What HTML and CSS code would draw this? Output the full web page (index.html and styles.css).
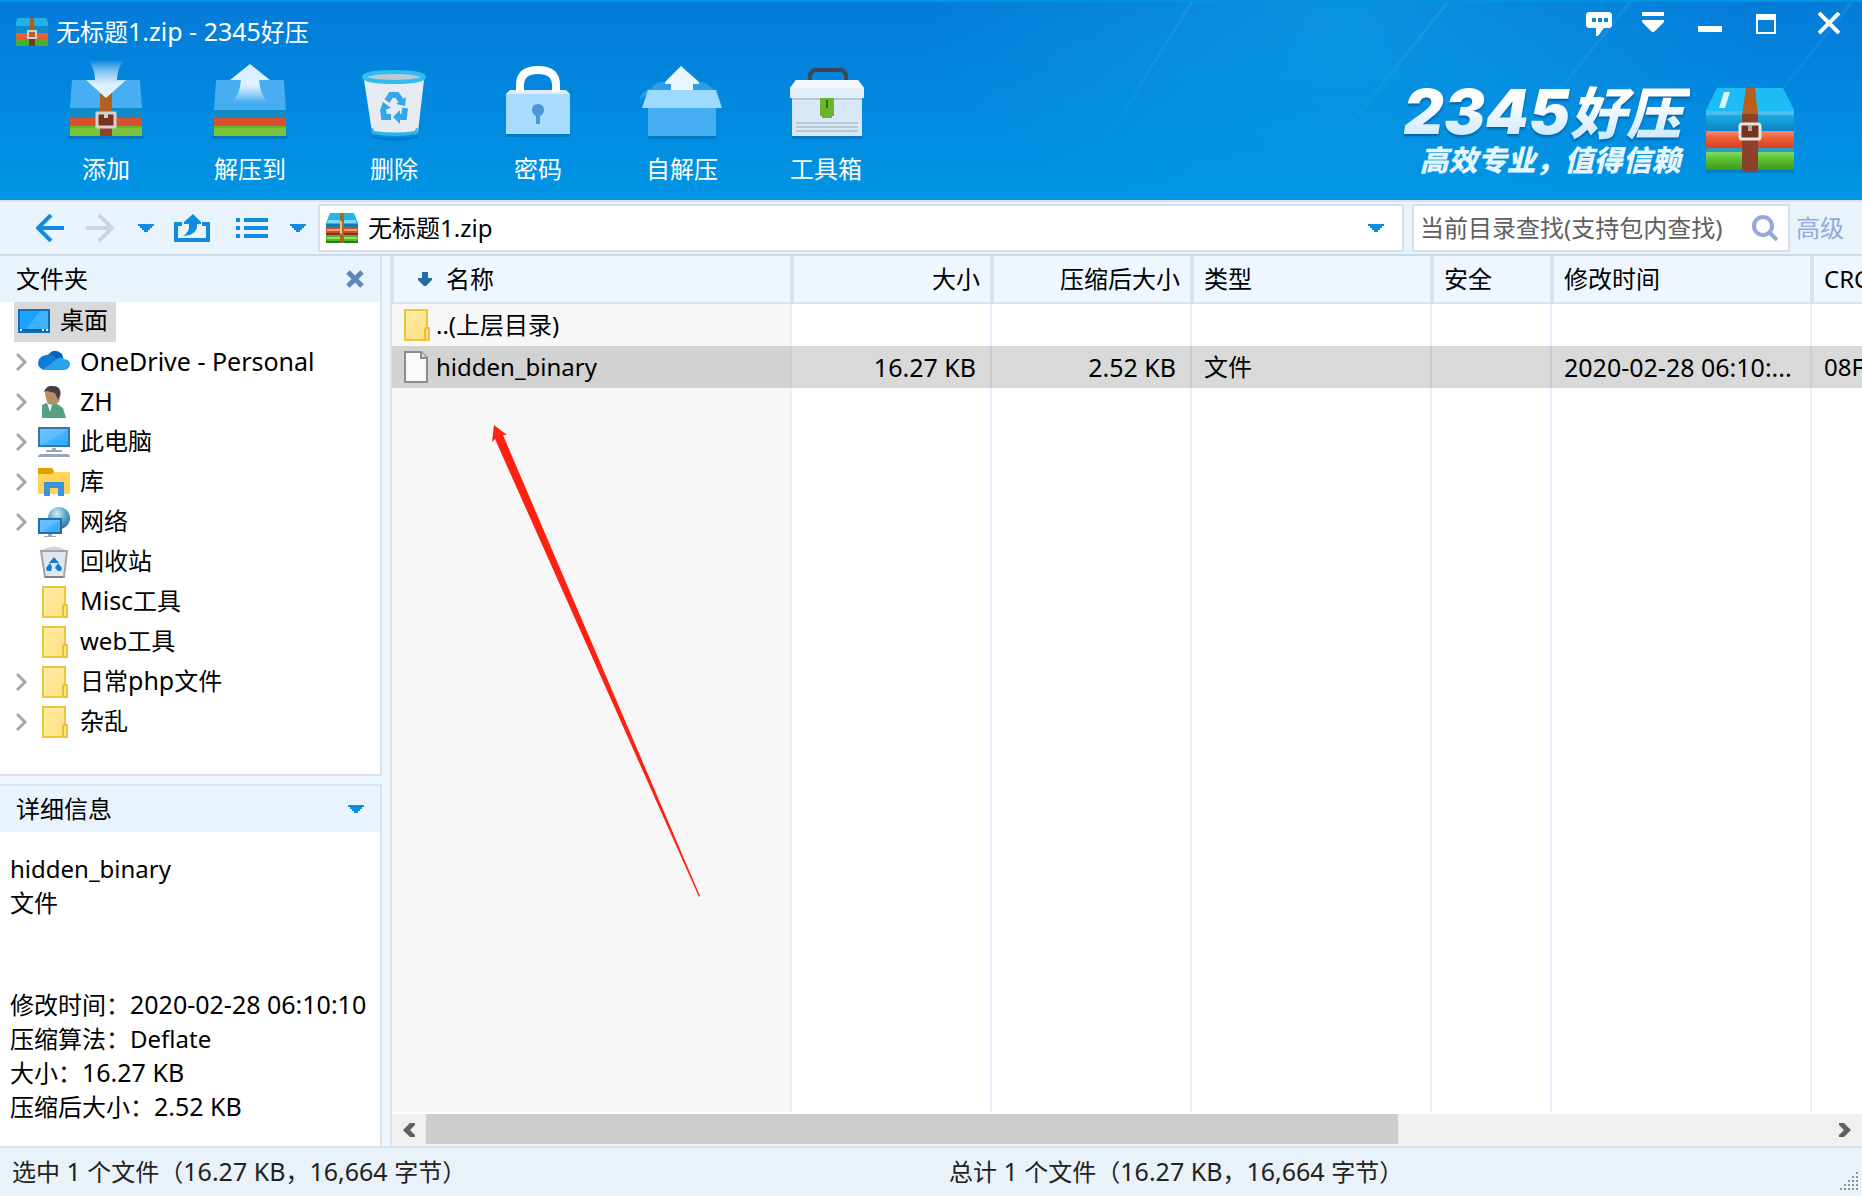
FILE: index.html
```html
<!DOCTYPE html>
<html lang="zh-CN">
<head>
<meta charset="utf-8">
<title>无标题1.zip - 2345好压</title>
<link rel="stylesheet" href="styles.css">
</head>
<body>
<svg class="defs" aria-hidden="true">
  <defs>
    <linearGradient id="g-down" x1="0" y1="0" x2="0" y2="1"><stop offset="0" stop-color="#fff" stop-opacity="0"/><stop offset="0.5" stop-color="#b9def9"/><stop offset="0.65" stop-color="#e0f2ff"/><stop offset="1" stop-color="#e0f2ff"/></linearGradient>
    <linearGradient id="g-up" x1="0" y1="0" x2="0" y2="1"><stop offset="0" stop-color="#d6eeff"/><stop offset="0.55" stop-color="#e0f2ff"/><stop offset="1" stop-color="#fff" stop-opacity="0"/></linearGradient>
    <linearGradient id="g-blue" x1="0" y1="0" x2="0" y2="1"><stop offset="0" stop-color="#1cb9f4"/><stop offset="1" stop-color="#0e83bd"/></linearGradient>
    <linearGradient id="g-red" x1="0" y1="0" x2="0" y2="1"><stop offset="0" stop-color="#ff8a66"/><stop offset="0.4" stop-color="#ee6038"/><stop offset="1" stop-color="#d6401c"/></linearGradient>
    <linearGradient id="g-green" x1="0" y1="0" x2="0" y2="1"><stop offset="0" stop-color="#84d968"/><stop offset="0.4" stop-color="#5cc234"/><stop offset="1" stop-color="#3f9e1c"/></linearGradient>
    <linearGradient id="g-screen" x1="0" y1="0" x2="1" y2="1"><stop offset="0" stop-color="#6cc6ff"/><stop offset="0.5" stop-color="#5bbcff"/><stop offset="0.55" stop-color="#41b2ff"/><stop offset="1" stop-color="#2ca9ff"/></linearGradient>
    <linearGradient id="g-folder" x1="0" y1="0" x2="1" y2="1"><stop offset="0" stop-color="#ffeca6"/><stop offset="1" stop-color="#fddf7d"/></linearGradient>
    <radialGradient id="g-globe" cx="0.4" cy="0.3" r="0.8"><stop offset="0" stop-color="#d5ecf4"/><stop offset="0.5" stop-color="#5ba9ca"/><stop offset="1" stop-color="#1e6694"/></radialGradient>
    <linearGradient id="g-ray" gradientUnits="userSpaceOnUse" x1="0" y1="0" x2="0" y2="160"><stop offset="0" stop-color="#fff" stop-opacity=".07"/><stop offset="1" stop-color="#fff" stop-opacity="0"/></linearGradient>
  </defs>
  <symbol id="folder" viewBox="0 0 28 32"><path d="M1 1h22v18h2v12H1z" fill="url(#g-folder)" stroke="#eac63f" stroke-width="2"/><path d="M21 31V21l1-2h3" fill="none" stroke="#e5be3c" stroke-width="2"/></symbol>
  <symbol id="chev" viewBox="0 0 12 18"><path d="M1 1l8 8-8 8" fill="none" stroke="#a8a8a8" stroke-width="3"/></symbol>
  <symbol id="caret" viewBox="0 0 16 8"><path d="M0 0h16v2h-2v2h-2v2h-2v2H6V6H4V4H2V2H0z" fill="#0f8be0"/></symbol>
  <symbol id="books" viewBox="0 0 32 30"><path d="M4 0h24l4 10v4H0v-4z" fill="#27b5e9"/><path d="M2 7h28v3H1z" fill="#7edaf9"/><path d="M0 11h32v3H0z" fill="#1379b3"/><path d="M0 14h32v8H0z" fill="#d24d2c"/><path d="M1 16h30v2H1z" fill="#f6a070"/><path d="M0 20h32v2H0z" fill="#8c2f20"/><path d="M0 22h32v8H0z" fill="#52b530"/><path d="M1 24h30v2H1z" fill="#9be25c"/><path d="M0 28h32v2H0z" fill="#287b1c"/><path d="M14 0h4v30h-4z" fill="#a56a24"/><path d="M14 8h2v13h-2z" fill="#ecc36f"/></symbol>
</svg>

<header class="banner">
  <svg class="rays" viewBox="0 0 700 198" aria-hidden="true"><path d="M30 0l-100 160M286 0L158 160M468 0L340 160M690 0L562 160" stroke="url(#g-ray)" stroke-width="3"/></svg>
  <div class="titlebar">
    <h1 class="title">
      <svg width="32" height="28" viewBox="0 0 32 28" aria-hidden="true"><path d="M2 0h28l2 4v11H0V4z" fill="#23b1e8"/><path d="M0 8h32v8H0z" fill="#0d8ccd"/><path d="M0 15h32v7H0z" fill="#e85c38"/><path d="M0 21h32v7H0z" fill="#4dad2c"/><path d="M14 0h4l1 28h-6z" fill="#a9621d"/><path d="M13 21h6v7h-6z" fill="#703d20"/><path d="M12 13h8v7h-8z" fill="#b0622e" stroke="#d5cfc9" stroke-width="2"/></svg>
      <span>无标题<span class="latin">1.zip - 2345</span>好压</span>
    </h1>
    <div class="controls">
      <button type="button" aria-label="反馈"><svg width="26" height="24" viewBox="0 0 26 24"><path d="M2 0h22l2 2v12l-2 2h-6l-6 8h-2v-8H2l-2-2V2z" fill="#fff"/><path d="M6 6h4v4H6zM12 6h4v4h-4zM18 6h4v4h-4z" fill="#0a84dc"/></svg></button>
      <button type="button" aria-label="菜单" class="menu"><svg width="22" height="24" viewBox="0 0 22 24"><path d="M0 0h22v4H0zM0 8h22v2L12 20h-2L0 10z" fill="#fff"/></svg></button>
      <button type="button" aria-label="最小化"><svg width="24" height="24" viewBox="0 0 24 24"><path d="M0 14h24v6H0z" fill="#fff"/></svg></button>
      <button type="button" aria-label="最大化"><svg width="20" height="24" viewBox="0 0 20 24"><path d="M0 2h20v20H0zM2 8v12h16V8z" fill="#fff" fill-rule="evenodd"/></svg></button>
      <button type="button" aria-label="关闭" class="close"><svg width="22" height="24" viewBox="0 0 22 24"><path d="M1 1l20 20M21 1L1 21" stroke="#fff" stroke-width="4"/></svg></button>
    </div>
  </div>
  <div class="ribbon">
    <nav class="tools" aria-label="工具栏">
      <button type="button"><svg width="88" height="88" viewBox="0 0 88 88"><path d="M6 80h76v3H6z" fill="#0560a0" fill-opacity=".4"/><path d="M10 24h68l2 28H8z" fill="#48aef2"/><path d="M8 52h72v10H8z" fill="#0f8ac6"/><path d="M8 62h72v8H8z" fill="#da4f2c"/><path d="M8 70h72v2H8z" fill="#68b62c"/><path d="M8 72h72v8H8z" fill="#79c43b"/><path d="M38 36h12v22H38z" fill="#b3601a"/><path d="M38 58h12v22H38z" fill="#8d432a"/><path d="M35 57h18v14H35z" fill="#7d331b" stroke="#d2d2d2" stroke-width="3"/><path d="M42 58h4v4h-4z" fill="#d2d2d2"/><path d="M26 4h36q-7 9-7 20h9L44 42 24 24h9q0-11-7-20z" fill="url(#g-down)"/></svg><span>添加</span></button>
      <button type="button"><svg width="88" height="88" viewBox="0 0 88 88"><path d="M6 80h76v3H6z" fill="#0560a0" fill-opacity=".4"/><path d="M10 24h68l2 30H8z" fill="#48aef2"/><path d="M8 54h72v8H8z" fill="#0f8ac6"/><path d="M8 62h72v8H8z" fill="#da4f2c"/><path d="M8 70h72v2H8z" fill="#68b62c"/><path d="M8 72h72v8H8z" fill="#79c43b"/><path d="M44 8l20 16H53q1 14 9 22H26q8-8 9-22H24z" fill="url(#g-up)"/></svg><span>解压到</span></button>
      <button type="button"><svg width="88" height="88" viewBox="0 0 88 88"><path d="M22 80q22 4 46 0v2q-22 5-46 0z" fill="#0560a0" fill-opacity=".4"/><path d="M14 24h60l-6 52q-24 6-46 0z" fill="#e6eaf1"/><path d="M21 72q23 4 47 0l-1 6q-22 4-45 0z" fill="#2fb3e8"/><path d="M23 71q21 4 43 0l-1 4q-20 3-41 0z" fill="#e6eaf1"/><ellipse cx="44" cy="21" rx="30" ry="5" fill="#bfc9d6" stroke="#30bdf2" stroke-width="4"/><path d="M37 45l4-6h6l5 7" fill="none" stroke="#35a7e8" stroke-width="6"/><path d="M46 48l9 2 1-9z" fill="#35a7e8"/><path d="M55 52l-1 9h-6" fill="none" stroke="#35a7e8" stroke-width="6"/><path d="M50 54v14l-7-7z" fill="#35a7e8"/><path d="M41 61h-7l-1-8" fill="none" stroke="#35a7e8" stroke-width="6"/><path d="M30 55l3-9 8 6z" fill="#35a7e8"/></svg><span>删除</span></button>
      <button type="button"><svg width="88" height="88" viewBox="0 0 88 88"><path d="M12 78h64v3H12z" fill="#0560a0" fill-opacity=".4"/><path d="M26 36V29q0-15 18-15t18 15v7" fill="none" stroke="#fff" stroke-width="8"/><path d="M16 34h56l4 4H12z" fill="#e1eaf7"/><path d="M22 30h8v6h-8zM58 30h8v6h-8z" fill="#fff"/><path d="M12 38h64v40H12z" fill="#a8dcff"/><path d="M44 48q6 0 6 6 0 4-4 6v8h-4v-8q-4-2-4-6 0-6 6-6z" fill="#5094da"/></svg><span>密码</span></button>
      <button type="button"><svg width="88" height="88" viewBox="0 0 88 88"><path d="M10 80h68v3H10z" fill="#0560a0" fill-opacity=".4"/><path d="M10 38q6-14 18-12h30q14-2 21 15l-4-2H10L1 43q4-9 12-11z" fill="#2a9ee7"/><path d="M43 10l18 16v2h-6v8H33v-8h-6v-2z" fill="#e8f6ff"/><path d="M10 50h68v30H10z" fill="#46aff3"/><path d="M10 34h68l6 18H4z" fill="#9ed9ff"/></svg><span>自解压</span></button>
      <button type="button"><svg width="88" height="88" viewBox="0 0 88 88"><path d="M10 80h70v3H10z" fill="#0560a0" fill-opacity=".4"/><path d="M28 26v-8l4-4h28l4 4v8" fill="none" stroke="#3d4654" stroke-width="4"/><path d="M10 40h70v40H10z" fill="#d9e8f7"/><path d="M10 43h70M14 67h62M14 71h62M14 75h62" stroke="#b4cad9" stroke-width="2"/><path d="M8 32l6-8h62l6 8v10H8z" fill="#e2edf7"/><path d="M8 32l6-8h62l6 8z" fill="#f4f8fc"/><path d="M38 42h14v18h-2v2H40v-2h-2z" fill="#6cb42c"/><path d="M44 44h2v8h-2z" fill="#316e12"/></svg><span>工具箱</span></button>
    </nav>
    <div class="brand">
      <div class="brand-text">
        <div class="brand-name"><span class="brand-num">2345</span>好压</div>
        <div class="slogan">高效专业，值得信赖</div>
      </div>
      <svg width="92" height="88" viewBox="0 0 92 88" aria-hidden="true"><path d="M2 82h88v3H2z" fill="#0560a0" fill-opacity=".4"/><path d="M13 0h66l11 22v6H2v-6z" fill="#1cbcf5"/><path d="M2 23h88v19H2z" fill="url(#g-blue)"/><path d="M2 23h88v4H2z" fill="#4dbdee"/><path d="M2 43h88v17H2z" fill="url(#g-red)"/><path d="M2 60h88v4H2z" fill="#2a9cc4"/><path d="M2 64h88v17H2z" fill="url(#g-green)"/><path d="M20 4h6l-5 16h-6z" fill="#d9f4ff"/><path d="M42 0h9l3 28H38z" fill="#b85f1d"/><path d="M38 26h16v56l-3 2H41l-3-2z" fill="#8b412a"/><rect x="36" y="36" width="20" height="15" rx="2" fill="#74331f" stroke="#ece6e0" stroke-width="3"/><path d="M44 37h4v6h-4z" fill="#b9a79b"/></svg>
    </div>
  </div>
</header>

<div class="navbar">
  <div class="nav-buttons">
    <button type="button" aria-label="后退"><svg width="28" height="28" viewBox="0 0 28 28"><path d="M15 1L2 14l13 13M2 14h26" fill="none" stroke="#0f8be0" stroke-width="4"/></svg></button>
    <button type="button" aria-label="前进" class="fwd"><svg width="28" height="28" viewBox="0 0 28 28"><path d="M13 1l13 13-13 13M26 14H0" fill="none" stroke="#d0d4e0" stroke-width="4"/></svg></button>
    <button type="button" aria-label="历史"><svg width="16" height="8"><use href="#caret"/></svg></button>
    <button type="button" aria-label="向上"><svg width="36" height="28" viewBox="0 0 36 28"><path d="M8 10H2v16h32V10h-6" fill="none" stroke="#0f8be0" stroke-width="4"/><path d="M19 0l8 8v2h-4q1 11-14 12 7-4 6-12h-5V8z" fill="#0f8be0"/></svg></button>
    <button type="button" aria-label="视图" class="list"><svg width="32" height="20" viewBox="0 0 32 20"><path d="M0 2h4M8 2h24M0 10h4M8 10h24M0 18h4M8 18h24" stroke="#0f8be0" stroke-width="4"/></svg></button>
    <button type="button" aria-label="视图选项"><svg width="16" height="8"><use href="#caret"/></svg></button>
  </div>
  <div class="address">
    <svg width="32" height="32"><use href="#books"/></svg>
    <input type="text" aria-label="地址" value="无标题1.zip">
    <button type="button" aria-label="展开地址"><svg width="16" height="8"><use href="#caret"/></svg></button>
  </div>
  <div class="search">
    <input type="text" aria-label="查找" placeholder="当前目录查找(支持包内查找)">
    <button type="button" aria-label="搜索"><svg width="26" height="26" viewBox="0 0 26 26"><circle cx="11" cy="11" r="9" fill="none" stroke="#93a9dc" stroke-width="4"/><path d="M17 17l8 8" stroke="#93a9dc" stroke-width="4"/></svg></button>
  </div>
  <a class="advanced" href="#">高级</a>
</div>

<div class="workspace">
  <aside class="sidebar">
    <section class="tree-pane">
      <div class="pane-head"><h2>文件夹</h2><button type="button" aria-label="关闭文件夹栏"><svg width="18" height="18" viewBox="0 0 18 18"><path d="M2 2l14 14M16 2L2 16" stroke="#5f86bb" stroke-width="5"/></svg></button></div>
      <ul class="tree">
        <li class="root"><span class="selected"><svg width="32" height="24" viewBox="0 0 32 24"><path d="M1 1h30v22H1z" fill="#1aa2ff" stroke="#0a6fbc" stroke-width="2"/><path d="M22 2h8v18H9z" fill="#3db2ff"/><path d="M2 20h28v2H2z" fill="#0a5f9e"/><path d="M2 20h2v2H2zM24 20h2v2h-2zM28 20h2v2h-2z" fill="#fff"/></svg><span>桌面</span></span></li>
        <li><svg class="chev"><use href="#chev"/></svg><svg width="32" height="32" viewBox="0 0 32 32"><path d="M10 9q6-8 14-1l2 7-14 2z" fill="#0a63ba"/><path d="M8 24q-8-1-8-7t8-8q8-1 11 5l-6 8z" fill="#0f7bd8"/><path d="M4 24l15-11q3-3 7 0 6 1 6 5t-5 6z" fill="#28a4ea"/></svg><span class="latin">OneDrive - Personal</span></li>
        <li><svg class="chev"><use href="#chev"/></svg><svg width="32" height="32" viewBox="0 0 32 32"><path d="M7 8q1-8 8-8t8 7l-2 9-6 3-6-3z" fill="#b98d68"/><path d="M6 6q2-7 9-6 8 0 7 9l-2 5-3-7-8-2z" fill="#414042"/><path d="M4 32V19l7-3 4 3 3-2 7 5 3 10z" fill="#56a181"/><path d="M9 17l3 9 2-7z" fill="#eef3f2"/></svg><span class="latin">ZH</span></li>
        <li><svg class="chev"><use href="#chev"/></svg><svg width="32" height="32" viewBox="0 0 32 32"><path d="M1 2h30v18H1z" fill="url(#g-screen)" stroke="#3a76a4" stroke-width="2"/><path d="M14 22h4v2h6v2H8v-2h6zM2 28h28l2 2v1H0v-1z" fill="#98a7bc"/></svg><span>此电脑</span></li>
        <li><svg class="chev"><use href="#chev"/></svg><svg width="32" height="32" viewBox="0 0 32 32"><path d="M0 2h14l2 3v4H0z" fill="#df9f00"/><path d="M0 8h14l2-2h16v22H0z" fill="#ffd35a"/><path d="M6 16h20v14h-6v-8h-8v8H6z" fill="#3894db"/></svg><span>库</span></li>
        <li><svg class="chev"><use href="#chev"/></svg><svg width="32" height="32" viewBox="0 0 32 32"><circle cx="21" cy="12" r="11" fill="url(#g-globe)"/><path d="M1 13h22v14H1z" fill="url(#g-screen)" stroke="#2a6c9c" stroke-width="2"/><path d="M10 28h4v2h4v1H6v-1h4z" fill="#98a7bc"/></svg><span>网络</span></li>
        <li><svg class="chev"></svg><svg width="32" height="32" viewBox="0 0 32 32"><path d="M4 4q12-7 24 0z" fill="#ccd5dd"/><path d="M3 5h26l-3 26H7z" fill="#e2e6ec" stroke="#a1a4aa" stroke-width="2"/><path d="M7 31h18" stroke="#808287" stroke-width="2"/><path d="M16 11l5 6H11zM8 22l4-5 2 4-1 4H9zM24 22l-4-5-3 5 3 3h3z" fill="#0d7fd2"/></svg><span>回收站</span></li>
        <li><svg class="chev"></svg><svg class="folder"><use href="#folder"/></svg><span><span class="latin">Misc</span>工具</span></li>
        <li><svg class="chev"></svg><svg class="folder"><use href="#folder"/></svg><span>web工具</span></li>
        <li><svg class="chev"><use href="#chev"/></svg><svg class="folder"><use href="#folder"/></svg><span>日常<span class="latin">php</span>文件</span></li>
        <li><svg class="chev"><use href="#chev"/></svg><svg class="folder"><use href="#folder"/></svg><span>杂乱</span></li>
      </ul>
    </section>
    <section class="details-pane">
      <div class="pane-head"><h2>详细信息</h2><button type="button" aria-label="收起详细信息"><svg width="16" height="8"><use href="#caret"/></svg></button></div>
      <div class="details">
        <p>hidden_binary<br>文件</p>
        <p>修改时间：<span class="latin">2020-02-28 06:10:10</span><br>压缩算法：Deflate<br>大小：<span class="latin">16.27 KB</span><br>压缩后大小：<span class="latin">2.52 KB</span></p>
      </div>
    </section>
  </aside>
  <main class="listing">
    <div class="table-wrap">
      <table>
        <colgroup><col class="c-name"><col class="c-size"><col class="c-size"><col class="c-type"><col class="c-safe"><col class="c-date"><col></colgroup>
        <thead><tr><th><span class="sort"><svg width="14" height="14" viewBox="0 0 14 14"><path d="M4 0h6v6h4v2l-6 6H6L0 8V6h4z" fill="#256c9f"/></svg>名称</span></th><th class="num">大小</th><th class="num">压缩后大小</th><th>类型</th><th>安全</th><th>修改时间</th><th>CRC</th></tr></thead>
        <tbody>
          <tr><td><span class="file"><svg class="folder"><use href="#folder"/></svg>..(上层目录)</span></td><td></td><td></td><td></td><td></td><td></td><td></td></tr>
          <tr class="picked"><td><span class="file"><svg width="28" height="32" viewBox="0 0 28 32"><path d="M1 1h16l6 6v24H1z" fill="#f9fbfb" stroke="#8c8c8c" stroke-width="2"/><path d="M17 1v6h6" fill="#ddd" stroke="#8c8c8c" stroke-width="2"/></svg>hidden_binary</span></td><td class="num latin">16.27 KB</td><td class="num latin">2.52 KB</td><td>文件</td><td></td><td class="latin">2020-02-28 06:10:...</td><td>08F</td></tr>
          <tr class="rest"><td></td><td></td><td></td><td></td><td></td><td></td><td></td></tr>
        </tbody>
      </table>
    </div>
    <div class="scrollbar">
      <button type="button" aria-label="向左滚动"><svg width="12" height="14" viewBox="0 0 12 14"><path d="M12 0H7L0 7l7 7h5v-2L7 7l5-5z" fill="#606060"/></svg></button>
      <div class="track"><div class="thumb"></div></div>
      <button type="button" aria-label="向右滚动"><svg width="12" height="14" viewBox="0 0 12 14"><path d="M0 0h5l7 7-7 7H0v-2l5-5-5-5z" fill="#606060"/></svg></button>
    </div>
    <svg class="pointer" width="208" height="472" viewBox="0 0 208 472" aria-hidden="true"><path d="M2 0l13 10h-4l197 461-1 1L3 14l-3 3z" fill="#ff2010"/></svg>
  </main>
</div>

<footer class="status">
  <p>选中<span class="latin"> 1 </span>个文件（<span class="latin">16.27 KB</span>，<span class="latin">16,664 </span>字节）</p>
  <p>总计<span class="latin"> 1 </span>个文件（<span class="latin">16.27 KB</span>，<span class="latin">16,664 </span>字节）</p>
  <svg width="18" height="18" viewBox="0 0 18 18" aria-hidden="true"><path d="M16 0h2v2h-2zM12 4h2v2h-2zM16 4h2v2h-2zM8 8h2v2H8zM12 8h2v2h-2zM16 8h2v2h-2zM4 12h2v2H4zM8 12h2v2H8zM12 12h2v2h-2zM16 12h2v2h-2zM0 16h2v2H0zM4 16h2v2H4zM8 16h2v2H8zM12 16h2v2h-2zM16 16h2v2h-2z" fill="#8f93a0"/></svg>
</footer>
</body>
</html>
```
FILE: styles.css
```css
* { box-sizing: border-box; }

body {
  margin: 0;
  min-height: 100vh;
  display: flex;
  flex-direction: column;
  overflow: hidden;
  background: #fff;
  color: #000;
  font: 24px/34px "Noto Sans", "Noto Sans CJK SC", sans-serif;
}

.defs { position: absolute; width: 0; height: 0; }
svg { display: block; flex: none; }
h1, h2, p, ul { margin: 0; padding: 0; font: inherit; }
ul { list-style: none; }
button {
  display: flex;
  align-items: center;
  justify-content: center;
  margin: 0;
  padding: 0;
  border: 0;
  background: none;
  color: inherit;
  font: inherit;
}
input {
  min-width: 0;
  flex: 1;
  padding: 0;
  border: 0;
  outline: 0;
  background: none;
  color: inherit;
  font: inherit;
}
.latin { font-size: 25px; line-height: 24px; }

/* Banner */
.banner {
  position: relative;
  height: 200px;
  border-top: 2px solid #0094df;
  background:
    radial-gradient(420px 220px at 72% 10%, rgba(16, 168, 232, .5), rgba(16, 168, 232, 0)),
    linear-gradient(#047bd8, #0095e5);
  color: #fff;
}
.rays { position: absolute; top: 0; right: 0; width: 700px; height: 100%; overflow: visible; }
.titlebar, .ribbon { position: relative; display: flex; justify-content: space-between; }
.titlebar { height: 54px; padding: 10px 22px 0 16px; }
.title { display: flex; align-items: center; gap: 8px; height: 40px; }
.controls { display: flex; align-items: flex-start; gap: 34px; }
.controls .menu { margin-left: -4px; }
.controls .close { margin-left: 8px; }

.ribbon { padding: 0 66px 0 34px; }
.tools { display: flex; }
.tools button { flex-direction: column; width: 144px; gap: 8px; }
.brand { display: flex; gap: 14px; padding-top: 32px; }
.brand-text { display: flex; flex-direction: column; margin-top: -8px; }
.brand-name {
  padding-right: 8px;
  background: linear-gradient(#fff 30%, #cfeaff 90%);
  background-clip: text;
  color: transparent;
  font: italic 900 56px/60px "Noto Sans CJK SC", sans-serif;
  filter: drop-shadow(0 2px 1px #0560a0);
}
.brand-num { font-family: Inter, sans-serif; font-size: 62px; }
.slogan {
  padding-left: 16px;
  font: italic 900 29px/32px "Noto Sans CJK SC", sans-serif;
  color: #e6f6ff;
}

/* Address bar */
.navbar {
  display: flex;
  align-items: center;
  height: 56px;
  border-top: 2px solid #dbe6f4;
  border-bottom: 2px solid #cfdbe6;
  padding: 0 18px 0 36px;
  background: #e8f3fc;
}
.nav-buttons { display: flex; align-items: center; gap: 20px; width: 282px; }
.nav-buttons .fwd { margin: 0 4px 0 2px; }
.nav-buttons .list { margin: 0 2px 0 6px; }
.address, .search {
  display: flex;
  align-items: center;
  height: 48px;
  border: 2px solid #d6deed;
  background: #fff;
}
.address { flex: 1; gap: 10px; padding: 0 18px 0 6px; }
.search { width: 378px; margin: 0 6px 0 8px; padding: 0 10px 0 6px; }
.search input::placeholder { color: #606060; opacity: 1; }
.advanced { color: #93a9dc; text-decoration: none; }

/* Sidebar */
.workspace { flex: 1; display: flex; min-height: 0; }
.sidebar {
  width: 392px;
  display: flex;
  flex-direction: column;
  border-right: 2px solid #dae3ec;
  padding-right: 8px;
  background: #eef6ff;
}
.tree-pane, .details-pane { border-right: 2px solid #dae3ec; background: #fff; }
.tree-pane { height: 520px; border-bottom: 2px solid #dae3ec; }
.details-pane { flex: 1; margin-top: 8px; border-top: 2px solid #dae3ec; }
.pane-head {
  display: flex;
  align-items: center;
  justify-content: space-between;
  height: 46px;
  padding: 0 16px;
  background: #e8f3fc;
}
.tree li { display: flex; align-items: center; gap: 10px; height: 40px; padding-left: 16px; }
.tree .root { padding-left: 14px; }
.tree li > span:last-child, .selected > span { padding-bottom: 2px; }
.tree .selected {
  display: flex;
  align-items: center;
  gap: 10px;
  height: 40px;
  padding: 0 8px 0 4px;
  background: #d9d9d9;
}
.chev { width: 12px; height: 18px; }
.folder { width: 28px; height: 32px; }
.tree .folder { margin: 0 0 0 4px; }
.details { padding: 20px 10px 0; white-space: nowrap; }
.details p + p { margin-top: 68px; }

/* File list */
.listing { position: relative; flex: 1; min-width: 0; display: flex; flex-direction: column; }
.table-wrap { flex: 1; display: flex; overflow: hidden; }
table { width: 100%; table-layout: fixed; border-spacing: 0; border-collapse: separate; }
.c-name { width: 400px; }
.c-size { width: 200px; }
.c-type { width: 240px; }
.c-safe { width: 120px; }
.c-date { width: 260px; }
th, td {
  padding: 0 12px;
  overflow: hidden;
  white-space: nowrap;
  text-align: left;
  font-weight: 400;
}
th {
  height: 48px;
  border-left: 2px solid #dae2ec;
  border-right: 2px solid #dae2ec;
  border-bottom: 2px solid #dae3ec;
  padding: 0 10px;
  background: #eef6ff;
}
td { height: 42px; border-right: 2px solid #e6f0fd; }
th:last-child, td:last-child { border-right: 0; padding-right: 0; }
td:first-child { background: #f7f7f7; }
.num { text-align: right; }
td.num { padding-right: 14px; }
.picked td { background: #d9d9d9; border-color: #c7ced7; }
.picked td:first-child { background: #d2d2d2; }
.rest td { height: auto; }
.sort, .file { display: flex; align-items: center; }
.sort { gap: 14px; padding-left: 14px; }
.file { gap: 4px; }

.scrollbar { display: flex; height: 34px; background: #f0f0f0; border-top: 2px solid #fff; }
.scrollbar button { width: 34px; }
.track { flex: 1; }
.thumb { width: 69.3%; height: 30px; background: #cdcdcd; }
.pointer { position: absolute; left: 100px; top: 169px; }

/* Status bar */
.status {
  position: relative;
  display: grid;
  grid-template-columns: 1fr 1fr;
  align-items: center;
  height: 50px;
  border-top: 2px solid #d7e4ee;
  background: #e9f1f9;
  color: #222;
}
.status p { padding-left: 12px; white-space: pre; }
.status p + p { padding-left: 18px; }
.status svg { position: absolute; right: 4px; bottom: 6px; }
```
